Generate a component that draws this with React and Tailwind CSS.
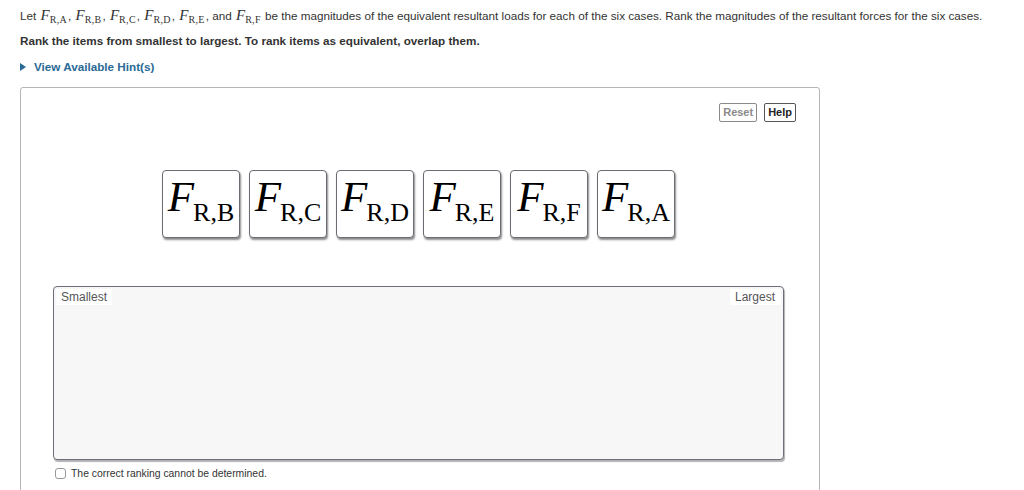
import React from 'react';

const serif = { fontFamily: '"Liberation Serif", "Times New Roman", serif' };

// inline math variable like F_{R,A}
const MathF = ({ sub }) => (
  <span className="whitespace-nowrap mx-[1px]" style={serif}>
    <span className="italic text-[15px]">F</span>
    <span className="text-[10px] relative top-[3px] tracking-[0.3px]">R,{sub}</span>
  </span>
);

const Tile = ({ sub }) => (
  <div
    className="w-[78px] h-[68px] bg-white border border-[#6b6b73] rounded-[4px] shadow-[1px_2px_2px_rgba(0,0,0,0.45)] flex items-center justify-center text-black"
    style={serif}
  >
    <span className="italic text-[43px] leading-none relative -top-[8px]">F</span>
    <span className="text-[26px] leading-none relative top-[9px] -ml-[1px]">R,{sub}</span>
  </div>
);

export default function App() {
  const tiles = ['B', 'C', 'D', 'E', 'F', 'A'];

  return (
    <div
      className="w-[1024px] h-[490px] overflow-hidden bg-white text-[#333]"
      style={{ fontFamily: '"Liberation Sans", Arial, sans-serif' }}
    >
      <div className="pl-5 pt-[7px]">
        <p className="text-[11.7px] leading-[16px] whitespace-nowrap">
          Let <MathF sub="A" />, <MathF sub="B" />, <MathF sub="C" />, <MathF sub="D" />,{' '}
          <MathF sub="E" />, and <MathF sub="F" /> be the magnitudes of the equivalent resultant loads
          for each of the six cases. Rank the magnitudes of the resultant forces for the six cases.
        </p>
        <p className="mt-[8px] text-[11.7px] leading-[16px] font-bold">
          Rank the items from smallest to largest. To rank items as equivalent, overlap them.
        </p>
        <div className="mt-[10px] flex items-center gap-[8px] text-[11.7px] leading-[16px] font-bold text-[#2a6a96]">
          <span className="w-0 h-0 border-y-[4px] border-y-transparent border-l-[6px] border-l-[#2a6a96]" />
          View Available Hint(s)
        </div>

        {/* Ranking card */}
        <div className="mt-[12px] w-[800px] h-[420px] border border-[#b5b5b5] rounded-tl-[3px] rounded-tr-[3px]">
          <div className="flex justify-end gap-[7px] pt-[15px] pr-[23px]">
            <button className="h-[19px] px-[3px] border border-[#8a8a8a] rounded-[2px] text-[11px] font-bold text-[#8a8a8a] leading-none">
              Reset
            </button>
            <button className="h-[19px] px-[3px] border border-[#555] rounded-[2px] text-[11px] font-bold text-[#222] leading-none">
              Help
            </button>
          </div>

          <div className="flex gap-[9px] pl-[141px] mt-[48px]">
            {tiles.map((t) => (
              <Tile key={t} sub={t} />
            ))}
          </div>

          <div className="ml-[32px] mt-[48px] w-[731px] h-[174px] bg-[#f7f7f7] border border-[#6e6e78] rounded-[4px] shadow-[1px_2px_1px_rgba(0,0,0,0.3)] flex justify-between items-start p-[2px]">
            <span className="bg-white px-[5px] pt-[1px] pb-[1px] text-[12px] leading-[14px] text-[#555]">
              Smallest
            </span>
            <span className="bg-white pl-[5px] pr-[6px] pt-[1px] pb-[1px] text-[12px] leading-[14px] text-[#555]">
              Largest
            </span>
          </div>

          <label className="ml-[34px] mt-[6px] flex items-center gap-[5px] text-[10.4px] text-[#333]">
            <span className="w-[11px] h-[11px] border border-[#999] rounded-[3px] bg-white" />
            The correct ranking cannot be determined.
          </label>
        </div>
      </div>
    </div>
  );
}
